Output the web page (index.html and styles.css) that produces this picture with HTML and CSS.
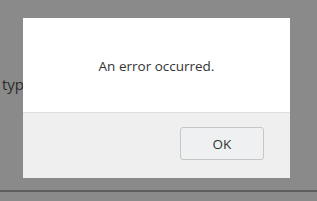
FILE: index.html
```html
<!DOCTYPE html>
<html lang="en">
<head>
    <meta charset="UTF-8">
    <meta name="viewport" content="width=device-width, initial-scale=1.0">
    <title>Error</title>
    <link rel="stylesheet" href="styles.css">
</head>
<body>
    <div class="page">
        <p class="page-text">type your message here</p>
    </div>

    <div class="overlay">
        <div class="dialog">
            <div class="dialog-body">
                <p>An error occurred.</p>
            </div>
            <div class="dialog-footer">
                <button class="btn-ok">OK</button>
            </div>
        </div>
    </div>
</body>
</html>
```

FILE: styles.css
```css
body {
    margin: 0;
    background-color: #8a8a8a;
    font-family: 'Open Sans', sans-serif;
    color: #333;
    overflow: hidden;
}
.page {
    height: 190px;
    border-bottom: 2px solid #5e5e5e;
    overflow: hidden;
}
.page-text {
    margin: 0;
    padding-top: 74px;
    padding-left: 2px;
    font-size: 15px;
    color: #2a2a2a;
    white-space: nowrap;
}
/* окно поверх страницы */
.overlay {
    position: absolute;
    top: 18px;
    left: 23px;
}
.dialog {
    width: 267px;
    height: 160px;
    background-color: #fff;
    display: flex;
    flex-direction: column;
}
.dialog-body {
    height: 94px;
    display: flex;
    justify-content: center;
    padding-top: 39px;
    box-sizing: border-box;
}
.dialog-body p {
    margin: 0;
    font-size: 13.5px;
    color: #333;
}
.dialog-footer {
    flex: 1;
    background-color: #efefef;
    border-top: 1px solid #dedede;
    display: flex;
    justify-content: flex-end;
    align-items: flex-start;
    padding: 14px 26px 0 0;
}
.btn-ok {
    width: 84px;
    height: 33px;
    background-color: #eff0f2;
    border: 1px solid #c6c6c6;
    border-radius: 3px;
    font-family: 'Open Sans', sans-serif;
    font-size: 13.5px;
    color: #333;
    cursor: pointer;
}
```
